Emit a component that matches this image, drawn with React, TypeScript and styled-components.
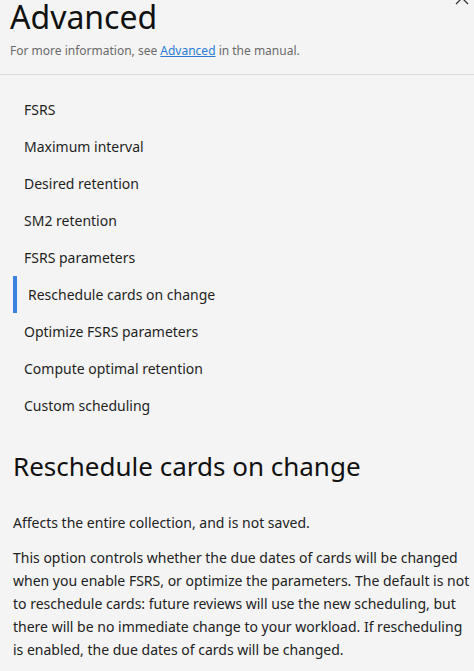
import React from "react";
import styled, { createGlobalStyle } from "styled-components";

const Global = createGlobalStyle`
  html, body { margin: 0; padding: 0; background: #f4f4f4; }
  body { font-family: "Noto Sans", "Open Sans", sans-serif; color: #1a1a1a; overflow: hidden; }
`;

const Page = styled.div`
  position: relative;
  width: 474px;
  height: 671px;
  background: #f4f4f4;
  overflow: hidden;
`;

const Header = styled.header`
  padding: 1px 10px 0 10px;
  height: 75px;
  border-bottom: 1px solid #dcdcdc;
  box-sizing: border-box;
`;

const Title = styled.h1`
  margin: 0;
  font-size: 32px;
  line-height: 32px;
  font-weight: 400;
  color: #111;
`;

const Sub = styled.p`
  margin: 9px 0 0;
  font-size: 12px;
  line-height: 18px;
  color: #6a6a6a;
`;

const Link = styled.a`
  color: #2b7cd3;
  text-decoration: underline;
`;

const Close = styled.svg`
  position: absolute;
  right: 4px;
  top: -10px;
`;

const Nav = styled.nav`
  display: flex;
  flex-direction: column;
  margin: 16px 0 0 13px;
`;

const NavItem = styled.div<{ $active?: boolean }>`
  height: 37px;
  line-height: 37px;
  font-size: 14px;
  color: #1f1f1f;
  padding-left: 11px;
  border-left: 4px solid ${(p) => (p.$active ? "#3b82e0" : "transparent")};
  margin-left: ${(p) => (p.$active ? "0" : "-4px")};
`;

const Section = styled.section`
  padding: 25px 4px 0 13px;
`;

const H2 = styled.h2`
  margin: 0;
  font-size: 26px;
  line-height: 34px;
  font-weight: 400;
  color: #111;
`;

const P = styled.p`
  margin: 0;
  font-size: 14px;
  line-height: 23px;
  color: #222;
`;

const Lead = styled(P)`
  margin-top: 28px;
`;

const Body = styled(P)`
  margin-top: 12px;
`;

const items = [
  "FSRS",
  "Maximum interval",
  "Desired retention",
  "SM2 retention",
  "FSRS parameters",
  "Reschedule cards on change",
  "Optimize FSRS parameters",
  "Compute optimal retention",
  "Custom scheduling",
];

export default function App() {
  return (
    <Page>
      <Global />
      <Close width="16" height="16" viewBox="0 0 16 16">
        <path d="M2 2 L14 14 M14 2 L2 14" stroke="#333" strokeWidth="1.3" fill="none" />
      </Close>
      <Header>
        <Title>Advanced</Title>
        <Sub>
          For more information, see <Link href="#">Advanced</Link> in the manual.
        </Sub>
      </Header>
      <Nav>
        {items.map((t) => (
          <NavItem key={t} $active={t === "Reschedule cards on change"}>
            {t}
          </NavItem>
        ))}
      </Nav>
      <Section>
        <H2>Reschedule cards on change</H2>
        <Lead>Affects the entire collection, and is not saved.</Lead>
        <Body>
          This option controls whether the due dates of cards will be changed when you enable
          FSRS, or optimize the parameters. The default is not to reschedule cards: future reviews
          will use the new scheduling, but there will be no immediate change to your workload. If
          rescheduling is enabled, the due dates of cards will be changed.
        </Body>
      </Section>
    </Page>
  );
}
